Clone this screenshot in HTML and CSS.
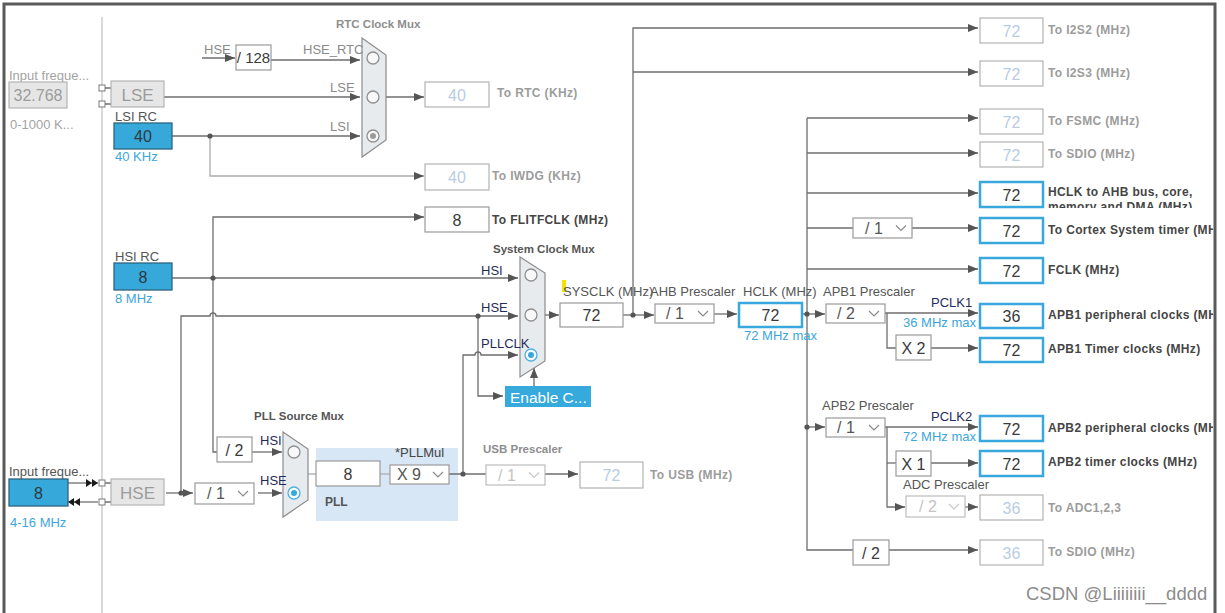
FILE: index.html
```html
<!DOCTYPE html>
<html lang="en">
<head>
  <meta charset="UTF-8" />
  <meta name="viewport" content="width=device-width, initial-scale=1.0">
  <title>Clock Configuration</title>
  <link rel="stylesheet" href="styles.css">
</head>
<body>

<div class="clock-tree">
<svg class="diagram" width="1225" height="613" viewBox="0 0 1225 613">
  <defs>
    <marker id="arr" viewBox="0 0 10 8" refX="10" refY="4" markerWidth="10" markerHeight="8" markerUnits="userSpaceOnUse" orient="auto">
      <path class="arrow-head" d="M0,0 L10,4 L0,8z"/>
    </marker>
    <clipPath id="inner"><rect x="0" y="0" width="1213" height="613"/></clipPath>
    <clipPath id="ahb-clip"><rect x="1046" y="187" width="170" height="21"/></clipPath>
  </defs>

  <!-- frame -->
  <path class="frame" d="M4,613 V4 H1215 V613"/>
  <line class="divider" x1="102" y1="17" x2="102" y2="613"/>

  <!-- PLL area background -->
  <rect class="pll-area" x="316" y="448" width="142" height="73"/>

  <!-- wires -->
  <g class="wire">
    <path d="M164,97 H360" marker-end="url(#arr)"/>
    <path d="M172,136 H360" marker-end="url(#arr)"/>
    <path class="light" d="M210,136 V176 H424" marker-end="url(#arr)"/>
    <path d="M202,58 H235" marker-end="url(#arr)"/>
    <path d="M271,60 H360" marker-end="url(#arr)"/>
    <path d="M386,97 H424" marker-end="url(#arr)"/>

    <path d="M172,278 H518" marker-end="url(#arr)"/>
    <path d="M217,452 H213 V217 H424" marker-end="url(#arr)"/>
    <path d="M181,493 V316 H210 a3,3 0 0 1 6,0 H518" marker-end="url(#arr)"/>
    <path d="M478,316 V396 H503" marker-end="url(#arr)"/>
    <path d="M463,474 V355 H475 a3,3 0 0 1 6,0 H518" marker-end="url(#arr)"/>
    <path d="M534,386 V368" marker-end="url(#arr)"/>
    <path d="M545,315 H559" marker-end="url(#arr)"/>
    <path d="M623,315 H654" marker-end="url(#arr)"/>
    <path d="M633,315 V28 H978" marker-end="url(#arr)"/>
    <path d="M633,72 H978" marker-end="url(#arr)"/>
    <path d="M714,314 H737" marker-end="url(#arr)"/>
    <path d="M802,314 H825" marker-end="url(#arr)"/>

    <path d="M807,118 V550 H853"/>
    <path d="M807,118 H978" marker-end="url(#arr)"/>
    <path d="M807,153 H978" marker-end="url(#arr)"/>
    <path d="M807,193 H978" marker-end="url(#arr)"/>
    <path d="M807,228 H853"/>
    <path d="M912,228 H978" marker-end="url(#arr)"/>
    <path d="M807,269 H978" marker-end="url(#arr)"/>
    <path d="M807,427 H825" marker-end="url(#arr)"/>
    <path d="M889,550 H978" marker-end="url(#arr)"/>

    <path d="M885,313 H978" marker-end="url(#arr)"/>
    <path d="M887,313 V348 H896"/>
    <path d="M931,348 H978" marker-end="url(#arr)"/>

    <path d="M885,427 H978" marker-end="url(#arr)"/>
    <path d="M887,427 V507 H905" marker-end="url(#arr)"/>
    <path d="M887,463 H896"/>
    <path d="M931,463 H978" marker-end="url(#arr)"/>
    <path d="M965,507 H978" marker-end="url(#arr)"/>

    <path d="M166,493 H193" marker-end="url(#arr)"/>
    <path d="M258,493 H282" marker-end="url(#arr)"/>
    <path d="M252,452 H282" marker-end="url(#arr)"/>
    <path class="light" d="M308,474 H316"/>
    <path class="light" d="M380,474 H390"/>
    <path d="M449,474 H486"/>
    <path d="M545,474 H578" marker-end="url(#arr)"/>

    <path d="M68,483 H98"/>
    <path d="M68,502 H98"/>
    <path d="M105,88 H111 M105,104 H111 M105,483 H111 M105,502 H111"/>
  </g>

  <g class="dot">
    <circle cx="210" cy="136" r="2.6"/>
    <circle cx="213" cy="278" r="2.6"/>
    <circle cx="478" cy="316" r="2.6"/>
    <circle cx="463" cy="474" r="2.6"/>
    <circle cx="633" cy="315" r="2.6"/>
    <circle cx="807" cy="314" r="2.6"/>
    <circle cx="807" cy="427" r="2.6"/>
    <circle cx="181" cy="493" r="2.6"/>
  </g>

  <!-- external oscillator pins -->
  <g class="pin-arrows">
    <path d="M86,479 L92,483 L86,487z M92,479 L98,483 L92,487z"/>
    <path d="M74,498 L68,502 L74,506z M80,498 L74,502 L80,506z"/>
  </g>
  <g class="port">
    <rect x="99" y="85" width="6" height="6"/>
    <rect x="99" y="101" width="6" height="6"/>
    <rect x="99" y="480" width="6" height="6"/>
    <rect x="99" y="499" width="6" height="6"/>
  </g>

  <!-- left column -->
  <text class="lbl gray" x="9" y="80">Input freque...</text>
  <g class="node gray" transform="translate(9,82)"><rect width="58" height="26"/><text x="29" y="19">32.768</text></g>
  <text class="lbl gray" x="10" y="129">0-1000 K...</text>

  <g class="node gray big" transform="translate(111,81)"><rect width="53" height="26"/><text x="26.5" y="19.5">LSE</text></g>
  <text class="lbl" x="115" y="121">LSI RC</text>
  <g class="node src" transform="translate(114,123)"><rect width="58" height="26"/><text x="29" y="19">40</text></g>
  <text class="lbl blue" x="115" y="161">40 KHz</text>

  <text class="lbl" x="115" y="261">HSI RC</text>
  <g class="node src" transform="translate(114,263)"><rect width="58" height="27"/><text x="29" y="20">8</text></g>
  <text class="lbl blue" x="115" y="303">8 MHz</text>

  <text class="lbl" x="9" y="476">Input freque...</text>
  <g class="node src" transform="translate(9,479)"><rect width="59" height="27"/><text x="29.5" y="20">8</text></g>
  <text class="lbl blue" x="10" y="527">4-16 MHz</text>
  <g class="node gray big" transform="translate(111,479)"><rect width="53" height="26"/><text x="26.5" y="19.5">HSE</text></g>

  <!-- RTC mux -->
  <polygon class="mux" points="362,38 386,55 386,140 362,157"/>
  <circle class="pin" cx="373" cy="58" r="6"/>
  <circle class="pin" cx="373" cy="97" r="6"/>
  <circle class="pin" cx="373" cy="136" r="6"/>
  <circle class="pin-dot" cx="373" cy="136" r="3"/>
  <text class="title off" x="336" y="28">RTC Clock Mux</text>
  <text class="lbl gray2" x="204" y="54">HSE</text>
  <g class="node small" transform="translate(236,45)"><rect width="35" height="25"/><text x="17.5" y="18">/ 128</text></g>
  <text class="lbl gray2" x="303" y="54">HSE_RTC</text>
  <text class="lbl gray2" x="330" y="92">LSE</text>
  <text class="lbl gray2" x="330" y="131">LSI</text>

  <g class="node off" transform="translate(425,82)"><rect width="64" height="25"/><text x="32" y="18.5">40</text></g>
  <text class="out off" x="497" y="97">To RTC (KHz)</text>
  <g class="node off" transform="translate(425,164)"><rect width="64" height="26"/><text x="32" y="19">40</text></g>
  <text class="out off" x="492" y="180">To IWDG (KHz)</text>

  <g class="node" transform="translate(425,207)"><rect width="64" height="25"/><text x="32" y="18.5">8</text></g>
  <text class="out" x="492" y="224">To FLITFCLK (MHz)</text>

  <!-- system clock mux -->
  <polygon class="mux" points="520,257 545,273 545,361 520,377"/>
  <circle class="pin" cx="531" cy="275" r="6"/>
  <circle class="pin" cx="531" cy="315" r="6"/>
  <circle class="pin on" cx="531" cy="355" r="6"/>
  <circle class="pin-dot on" cx="531" cy="355" r="3"/>
  <text class="title" x="493" y="253">System Clock Mux</text>
  <text class="lbl navy" x="481" y="275">HSI</text>
  <text class="lbl navy" x="481" y="312">HSE</text>
  <text class="lbl navy" x="481" y="348">PLLCLK</text>

  <g class="enable" transform="translate(505,386)"><rect width="86" height="21"/><text x="5" y="17">Enable C...</text></g>

  <rect class="mark" x="562" y="280" width="4" height="12"/>
  <text class="lbl" x="563" y="296">SYSCLK (MHz)</text>
  <g class="node" transform="translate(560,303)"><rect width="63" height="24"/><text x="31.5" y="18">72</text></g>

  <text class="lbl" x="650" y="296">AHB Prescaler</text>
  <g class="select" transform="translate(655,304)"><rect width="59" height="19"/><text x="11" y="15">/ 1</text><path d="M43,7 l5,5 l5,-5"/></g>

  <text class="lbl" x="743" y="296">HCLK (MHz)</text>
  <g class="node on" transform="translate(739,303)"><rect width="63" height="24"/><text x="31.5" y="18">72</text></g>
  <text class="lbl blue" x="744" y="340">72 MHz max</text>

  <!-- APB prescalers -->
  <text class="lbl" x="823" y="296">APB1 Prescaler</text>
  <g class="select" transform="translate(826,304)"><rect width="59" height="19"/><text x="11" y="15">/ 2</text><path d="M43,7 l5,5 l5,-5"/></g>
  <text class="lbl navy" x="931" y="307">PCLK1</text>
  <text class="lbl blue" x="903" y="327">36 MHz max</text>
  <g class="node" transform="translate(896,335)"><rect width="35" height="25"/><text x="17.5" y="18.5">X 2</text></g>

  <g class="select" transform="translate(853,218)"><rect width="59" height="20"/><text x="12" y="15.5">/ 1</text><path d="M43,7.5 l5,5 l5,-5"/></g>

  <text class="lbl" x="822" y="410">APB2 Prescaler</text>
  <g class="select" transform="translate(826,418)"><rect width="59" height="19"/><text x="11" y="15">/ 1</text><path d="M43,7 l5,5 l5,-5"/></g>
  <text class="lbl navy" x="931" y="421">PCLK2</text>
  <text class="lbl blue" x="903" y="441">72 MHz max</text>
  <g class="node" transform="translate(896,451)"><rect width="35" height="25"/><text x="17.5" y="18.5">X 1</text></g>

  <text class="lbl" x="903" y="489">ADC Prescaler</text>
  <g class="select off" transform="translate(906,496)"><rect width="59" height="21"/><text x="13" y="16">/ 2</text><path d="M43,8 l5,5 l5,-5"/></g>

  <g class="node" transform="translate(853,540)"><rect width="36" height="25"/><text x="18" y="18.5">/ 2</text></g>

  <!-- PLL -->
  <g class="node" transform="translate(217,437)"><rect width="35" height="25"/><text x="17.5" y="18.5">/ 2</text></g>
  <g class="select" transform="translate(195,483)"><rect width="59" height="21"/><text x="12" y="16">/ 1</text><path d="M43,8 l5,5 l5,-5"/></g>
  <polygon class="mux" points="283,432 308,449 308,500 283,517"/>
  <circle class="pin" cx="294" cy="452" r="6"/>
  <circle class="pin on" cx="294" cy="493" r="6"/>
  <circle class="pin-dot on" cx="294" cy="493" r="3"/>
  <text class="title" x="254" y="420">PLL Source Mux</text>
  <text class="lbl navy" x="260" y="445">HSI</text>
  <text class="lbl navy" x="260" y="485">HSE</text>

  <g class="node" transform="translate(316,461)"><rect width="64" height="25"/><text x="32" y="18.5">8</text></g>
  <text class="pll" x="325" y="506">PLL</text>
  <text class="lbl dark" x="395" y="457">*PLLMul</text>
  <g class="select" transform="translate(390,465)"><rect width="59" height="19"/><text x="7" y="15">X 9</text><path d="M43,7 l5,5 l5,-5"/></g>

  <text class="title off" x="483" y="453">USB Prescaler</text>
  <g class="select off" transform="translate(486,465)"><rect width="59" height="20"/><text x="12" y="15.5">/ 1</text><path d="M43,7.5 l5,5 l5,-5"/></g>
  <g class="node off" transform="translate(580,462)"><rect width="63" height="26"/><text x="31.5" y="19">72</text></g>
  <text class="out off" x="650" y="479">To USB (MHz)</text>

  <!-- outputs -->
  <g class="node off" transform="translate(980,18)"><rect width="63" height="25"/><text x="31.5" y="18.5">72</text></g>
  <g class="node off" transform="translate(980,61)"><rect width="63" height="25"/><text x="31.5" y="18.5">72</text></g>
  <g class="node off" transform="translate(980,109)"><rect width="63" height="25"/><text x="31.5" y="18.5">72</text></g>
  <g class="node off" transform="translate(980,142)"><rect width="63" height="25"/><text x="31.5" y="18.5">72</text></g>
  <g class="node on" transform="translate(980,182)"><rect width="63" height="25"/><text x="31.5" y="18.5">72</text></g>
  <g class="node on" transform="translate(980,218)"><rect width="63" height="25"/><text x="31.5" y="18.5">72</text></g>
  <g class="node on" transform="translate(980,258)"><rect width="63" height="25"/><text x="31.5" y="18.5">72</text></g>
  <g class="node on" transform="translate(980,304)"><rect width="63" height="24"/><text x="31.5" y="18">36</text></g>
  <g class="node on" transform="translate(980,338)"><rect width="63" height="24"/><text x="31.5" y="18">72</text></g>
  <g class="node on" transform="translate(980,416)"><rect width="63" height="25"/><text x="31.5" y="18.5">72</text></g>
  <g class="node on" transform="translate(980,451)"><rect width="63" height="25"/><text x="31.5" y="18.5">72</text></g>
  <g class="node off" transform="translate(980,495)"><rect width="63" height="25"/><text x="31.5" y="18.5">36</text></g>
  <g class="node off" transform="translate(980,540)"><rect width="63" height="25"/><text x="31.5" y="18.5">36</text></g>

  <g clip-path="url(#inner)">
    <text class="out off" x="1048" y="34">To I2S2 (MHz)</text>
    <text class="out off" x="1048" y="77">To I2S3 (MHz)</text>
    <text class="out off" x="1048" y="125">To FSMC (MHz)</text>
    <text class="out off" x="1048" y="158">To SDIO (MHz)</text>
    <g clip-path="url(#ahb-clip)">
      <text class="out" x="1048" y="196">HCLK to AHB bus, core,</text>
      <text class="out" x="1048" y="211">memory and DMA (MHz)</text>
    </g>
    <text class="out" x="1048" y="234">To Cortex System timer (MHz)</text>
    <text class="out" x="1048" y="274">FCLK (MHz)</text>
    <text class="out" x="1048" y="319">APB1 peripheral clocks (MHz)</text>
    <text class="out" x="1048" y="353">APB1 Timer clocks (MHz)</text>
    <text class="out" x="1048" y="432">APB2 peripheral clocks (MHz)</text>
    <text class="out" x="1048" y="466">APB2 timer clocks (MHz)</text>
    <text class="out off" x="1048" y="512">To ADC1,2,3</text>
    <text class="out off" x="1048" y="556">To SDIO (MHz)</text>
  </g>

  <text class="watermark" x="1026" y="600">CSDN @Liiiiiiii__dddd</text>
</svg>
</div>

</body>
</html>
```

FILE: styles.css
```css
body {
  margin: 0;
  background: #fff;
  overflow: hidden;
}

.clock-tree {
  width: 1225px;
  height: 613px;
}

.diagram {
  display: block;
  font-family: "Liberation Sans", Arial, sans-serif;
}

.frame {
  fill: none;
  stroke: #5a5a5a;
  stroke-width: 3;
}

.divider {
  stroke: #cdcdcd;
  stroke-width: 1.5;
}

.pll-area {
  fill: #d8e7f5;
}

/* wires */
.wire path {
  fill: none;
  stroke: #6e6e6e;
  stroke-width: 1.3;
}

.wire path.light {
  stroke: #ababab;
}

.arrow-head {
  fill: #555;
}

.dot circle {
  fill: #555;
}

.pin-arrows path {
  fill: #1a1a1a;
}

.port rect {
  fill: #fff;
  stroke: #7a7a7a;
  stroke-width: 1;
}

/* value boxes */
.node rect {
  fill: #fff;
  stroke: #9a9a9a;
  stroke-width: 1.2;
}

.node text {
  font-size: 16px;
  fill: #3a3a3a;
  text-anchor: middle;
}

.node.small text {
  font-size: 15px;
}

.node.on rect {
  stroke: #38a8df;
  stroke-width: 2.5;
}

.node.off rect {
  stroke: #b3b3b3;
}

.node.off text {
  fill: #b8cce4;
}

.node.src rect {
  fill: #36a8da;
  stroke: #2d6480;
  stroke-width: 1.3;
}

.node.src text {
  fill: #2c3a44;
}

.node.gray rect {
  fill: #e6e6e6;
  stroke: #b4b4b4;
}

.node.gray text {
  fill: #9c9c9c;
}

.node.big text {
  font-size: 17px;
}

/* dropdowns */
.select rect {
  fill: #fff;
  stroke: #9a9a9a;
  stroke-width: 1.2;
}

.select text {
  font-size: 16px;
  fill: #555;
}

.select path {
  fill: none;
  stroke: #8a8a8a;
  stroke-width: 1.2;
}

.select.off rect {
  stroke: #bdbdbd;
}

.select.off text {
  fill: #c4c4c4;
}

.select.off path {
  stroke: #c8c8c8;
}

/* muxes */
.mux {
  fill: #e8ebee;
  stroke: #8c8c8c;
  stroke-width: 1.2;
}

.pin {
  fill: #f8f8f8;
  stroke: #909090;
  stroke-width: 1.3;
}

.pin.on {
  fill: #fff;
  stroke: #4db0e3;
}

.pin-dot {
  fill: #9a9a9a;
}

.pin-dot.on {
  fill: #36a8df;
}

.enable rect {
  fill: #36a9dd;
}

.enable text {
  font-size: 15.5px;
  fill: #fff;
}

.mark {
  fill: #f2e400;
}

/* labels */
.lbl {
  font-size: 13px;
  fill: #555;
}

.lbl.gray {
  fill: #a3a3a3;
}

.lbl.gray2 {
  fill: #8a8a8a;
}

.lbl.dark {
  fill: #444;
}

.lbl.navy {
  fill: #1f2c5c;
}

.lbl.blue {
  fill: #3ca6dc;
}

.title {
  font-size: 11.5px;
  font-weight: bold;
  fill: #555;
}

.title.off {
  fill: #8e8e8e;
}

.pll {
  font-size: 12px;
  font-weight: bold;
  fill: #555;
}

.out {
  font-size: 12px;
  font-weight: bold;
  letter-spacing: 0.35px;
  fill: #454545;
}

.out.off {
  fill: #9c9c9c;
}

.watermark {
  font-size: 18.5px;
  fill: #8c8c8c;
}
```
